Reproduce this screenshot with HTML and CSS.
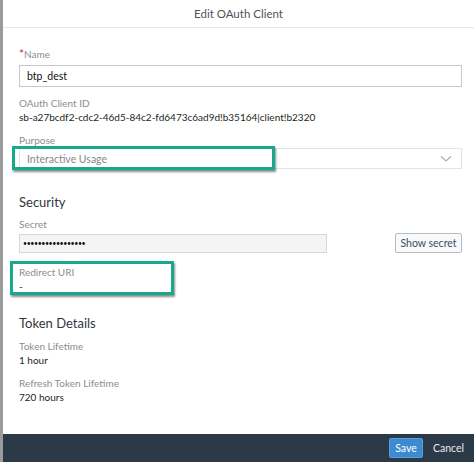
FILE: index.html
```html
<!DOCTYPE html>
<html>
<head>
<meta charset="utf-8">
<link rel="stylesheet" href="styles.css">
</head>
<body>
<div class="frame">
  <div class="dialog">
    <div class="header">Edit OAuth Client</div>
    <div class="content">
      <div class="label"><span class="req">*</span>Name</div>
      <div class="input name-input">btp_dest</div>

      <div class="label gap">OAuth Client ID</div>
      <div class="value">sb-a27bcdf2-cdc2-46d5-84c2-fd6473c6ad9d!b35164|client!b2320</div>

      <div class="label gap">Purpose</div>
      <div class="select-wrap">
        <div class="select">
          <span>Interactive Usage</span>
          <svg class="chev" width="12" height="8" viewBox="0 0 12 8"><path d="M1 1.5 L6 6 L11 1.5" fill="none" stroke="#a8adb2" stroke-width="1.1"/></svg>
        </div>
        <div class="highlight purpose-hl"></div>
      </div>

      <div class="section">Security</div>
      <div class="label small-gap">Secret</div>
      <div class="secret-row">
        <div class="input secret">•••••••••••••••••</div>
        <button class="btn">Show secret</button>
      </div>

      <div class="redirect">
        <div class="label">Redirect URI</div>
        <div class="value">-</div>
      </div>

      <div class="section token">Token Details</div>
      <div class="label token-gap">Token Lifetime</div>
      <div class="value">1 hour</div>
      <div class="label gap">Refresh Token Lifetime</div>
      <div class="value">720 hours</div>
    </div>
    <div class="footer">
      <button class="save">Save</button>
      <button class="cancel">Cancel</button>
    </div>
  </div>
</div>
</body>
</html>
```

FILE: styles.css
```css
* { box-sizing: border-box; }
html, body { margin: 0; padding: 0; background: #fff; }
body {
  font-family: Lato, "Open Sans", sans-serif;
  font-size: 10px;
  color: #32363a;
}
.frame {
  width: 474px;
  height: 462px;
  border-left: 3px solid #9b9b9b;
  overflow: hidden;
}
.dialog {
  display: flex;
  flex-direction: column;
  height: 100%;
}
.header {
  height: 28px;
  line-height: 27px;
  text-align: center;
  font-size: 11.5px;
  color: #4d5358;
  border-bottom: 1px solid #e6e6e6;
  flex: none;
}
.content {
  flex: 1;
  padding: 19px 12px 0 16px;
}
.label {
  line-height: 14px;
  height: 14px;
  color: #8b8e91;
  font-size: 10px;
}
.req { color: #c0392b; font-size: 12px; }
.label.gap { margin-top: 9px; }
.label.small-gap { margin-top: 5px; }
.label.token-gap { margin-top: 6px; }
.value {
  line-height: 14px;
  height: 14px;
  color: #1d1f21;
  font-size: 10px;
}
.input {
  border: 1px solid #c4c8cc;
  background: #fff;
  line-height: 20px;
  padding: 0 7px;
  color: #111;
}
.name-input {
  margin-top: 4px;
  height: 22px;
  font-size: 10.5px;
}
.select-wrap {
  position: relative;
  margin-top: 1px;
}
.select {
  height: 21px;
  border: 1px solid #e2e4e6;
  display: flex;
  align-items: center;
  justify-content: space-between;
  padding: 0 9px 0 7px;
  color: #86898c;
  font-size: 10.5px;
}
.highlight {
  position: absolute;
  border: 3px solid #17a98b;
  box-shadow: 1px 2px 2px rgba(0,0,0,0.45);
}
.purpose-hl {
  left: -7px;
  top: -2px;
  width: 263px;
  height: 24px;
}
.section {
  margin-top: 23px;
  font-size: 13px;
  line-height: 20px;
  color: #32363a;
}
.section.token { margin-top: 18px; }
.secret-row {
  margin-top: 2px;
  display: flex;
  justify-content: space-between;
  align-items: center;
}
.secret {
  width: 308px;
  height: 19px;
  line-height: 17px;
  background: #f4f4f4;
  border-color: #d6d8da;
  font-size: 7px;
  letter-spacing: -0.4px;
  padding-left: 3px;
}
.btn {
  font-family: inherit;
  font-size: 10.5px;
  color: #3b5063;
  background: #f8f9fa;
  border: 1px solid #b5bcc3;
  border-radius: 2px;
  height: 20px;
  width: 67px;
  padding: 0;
  line-height: 17px;
}
.redirect {
  margin: 8px 0 0 -9px;
  width: 164px;
  height: 34px;
  border: 3px solid #17a98b;
  box-shadow: 1px 2px 2px rgba(0,0,0,0.45);
  padding: 1px 0 0 6px;
}
.footer {
  flex: none;
  height: 28px;
  background: #2c3a48;
  display: flex;
  justify-content: flex-end;
  align-items: center;
  padding-right: 8px;
  gap: 8px;
}
.save {
  font-family: inherit;
  font-size: 10.5px;
  background: #3c8ad0;
  color: #fff;
  border: 1px solid #5a9edb;
  border-radius: 2px;
  height: 20px;
  width: 34px;
  padding: 0;
}
.cancel {
  font-family: inherit;
  font-size: 10.5px;
  background: none;
  border: none;
  color: #e6ebef;
  padding: 0 2px;
}
```
